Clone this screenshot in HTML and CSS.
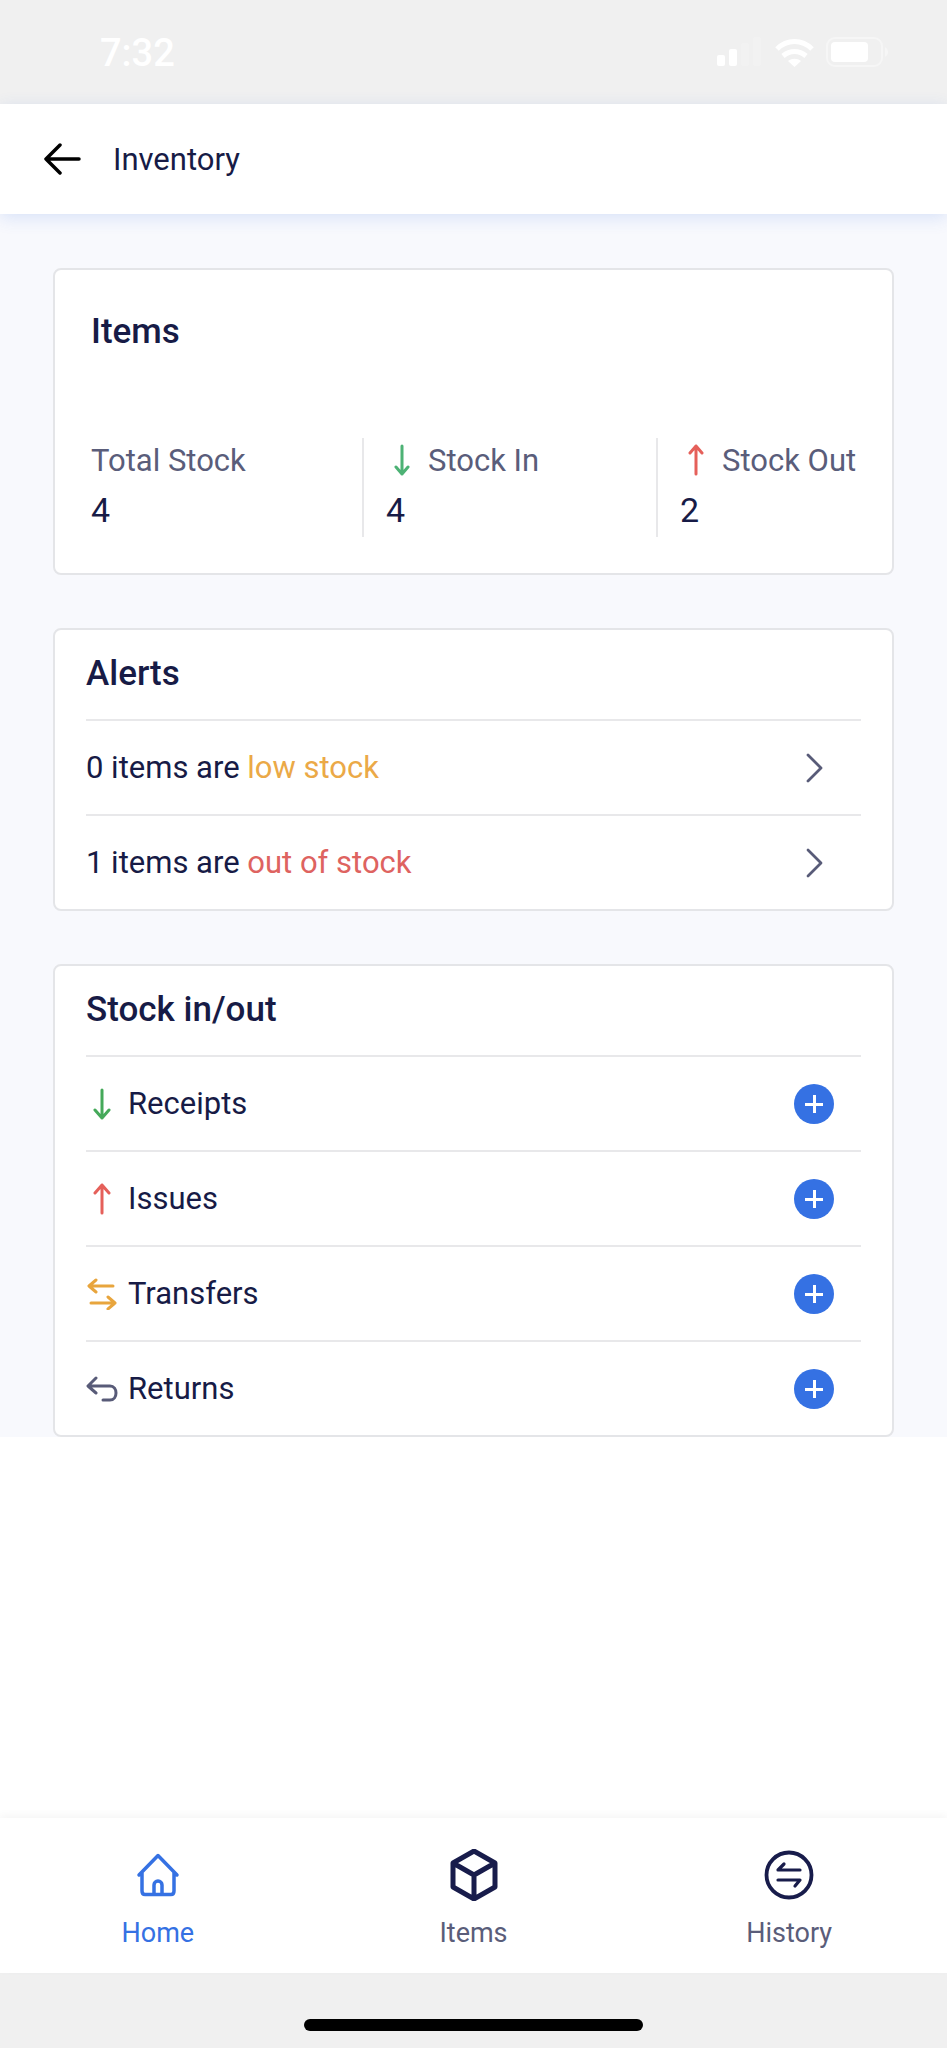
FILE: index.html
```html
<!DOCTYPE html>
<html>
<head>
  <title>Inventory</title>
  <link rel="stylesheet" href="styles.css">
</head>
<body>
  <div class="app">
    <div class="status-bar">
      <span class="time">7:32</span>
      <svg class="status-icons" width="173" height="34" viewBox="0 0 173 34">
        <rect x="0" y="20" width="8" height="11" rx="2" fill="#fff"/>
        <rect x="12" y="14" width="8" height="17" rx="2" fill="#fff"/>
        <rect x="24" y="8" width="8" height="23" rx="2" fill="#fff" opacity=".15"/>
        <rect x="36" y="2" width="8" height="29" rx="2" fill="#fff" opacity=".15"/>
        <path d="M60 14c10-10 25-10 35 0" fill="none" stroke="#fff" stroke-width="5"/>
        <path d="M66 21c7-6 16-6 23 0" fill="none" stroke="#fff" stroke-width="5"/>
        <path d="M71 26c4-3 9-3 13 0l-6.500 6z" fill="#fff"/>
        <rect x="110" y="3" width="55" height="28" rx="8" fill="none" stroke="#fff" stroke-width="2" opacity=".4"/>
        <rect x="114" y="7" width="37" height="20" rx="4" fill="#fff"/>
        <path d="M168 12c2 1 3 3 3 5s-1 4-3 5z" fill="#fff" opacity=".4"/>
      </svg>
    </div>

    <header class="topbar">
      <svg class="back" width="38" height="32" viewBox="0 0 38 32">
        <path d="M3 16H36M17 2 3 16l14 14" fill="none" stroke="#000" stroke-width="3.500" stroke-linecap="round" stroke-linejoin="round"/>
      </svg>
      <span class="page-title">Inventory</span>
    </header>

    <main class="content">
      <section class="card items-card">
        <h2 class="items-title">Items</h2>
        <div class="stats">
          <div class="stat">
            <div class="stat-label">Total Stock</div>
            <div class="stat-value">4</div>
          </div>
          <div class="stat">
            <div class="stat-label">
              <svg class="stat-arrow" width="18" height="32" viewBox="0 0 18 32"><path d="M9 2V30M3 23l6 7 6-7" fill="none" stroke="#4db275" stroke-width="3" stroke-linecap="round" stroke-linejoin="round"/></svg>
              Stock In
            </div>
            <div class="stat-value">4</div>
          </div>
          <div class="stat">
            <div class="stat-label">
              <svg class="stat-arrow" width="18" height="32" viewBox="0 0 18 32"><path d="M9 30V2M3 9l6-7 6 7" fill="none" stroke="#e5605a" stroke-width="3" stroke-linecap="round" stroke-linejoin="round"/></svg>
              Stock Out
            </div>
            <div class="stat-value">2</div>
          </div>
        </div>
      </section>

      <section class="card">
        <h2 class="card-title">Alerts</h2>
        <div class="row">
          <span>0 items are <span class="low">low stock</span></span>
          <svg class="chevron" width="20" height="30" viewBox="0 0 20 30"><path d="M3 2 16 15 3 28" fill="none" stroke="#585b78" stroke-width="2.800" stroke-linecap="round" stroke-linejoin="round"/></svg>
        </div>
        <div class="row">
          <span>1 items are <span class="out">out of stock</span></span>
          <svg class="chevron" width="20" height="30" viewBox="0 0 20 30"><path d="M3 2 16 15 3 28" fill="none" stroke="#585b78" stroke-width="2.800" stroke-linecap="round" stroke-linejoin="round"/></svg>
        </div>
      </section>

      <section class="card">
        <h2 class="card-title">Stock in/out</h2>
        <div class="row">
          <span class="row-name">
            <svg class="row-icon" width="32" height="32" viewBox="0 0 32 32"><path d="M16 2V30M9 22l7 8 7-8" fill="none" stroke="#45a95a" stroke-width="3" stroke-linecap="round" stroke-linejoin="round"/></svg>
            Receipts
          </span>
          <span class="plus"></span>
        </div>
        <div class="row">
          <span class="row-name">
            <svg class="row-icon" width="32" height="32" viewBox="0 0 32 32"><path d="M16 30V2M9 10l7-8 7 8" fill="none" stroke="#e5605a" stroke-width="3" stroke-linecap="round" stroke-linejoin="round"/></svg>
            Issues
          </span>
          <span class="plus"></span>
        </div>
        <div class="row">
          <span class="row-name">
            <svg class="row-icon" width="32" height="32" viewBox="0 0 32 32"><path d="M4 8H27M10 2 3 8l7 6M5 25H29M22 19l7 6-7 6" fill="none" stroke="#e8a53d" stroke-width="3" stroke-linecap="round" stroke-linejoin="round"/></svg>
            Transfers
          </span>
          <span class="plus"></span>
        </div>
        <div class="row">
          <span class="row-name">
            <svg class="row-icon" width="32" height="32" viewBox="0 0 32 32"><path d="M3 13H24c8 0 8 14 0 14H17M10 5 2 13l8 7" fill="none" stroke="#585b78" stroke-width="3" stroke-linecap="round" stroke-linejoin="round"/></svg>
            Returns
          </span>
          <span class="plus"></span>
        </div>
      </section>
    </main>

    <div class="spacer"></div>

    <nav class="tabbar">
      <div class="tab active">
        <svg width="52" height="52" viewBox="0 0 52 52"><path d="M7 26 26 6.500 45 26M10 23V42c0 2 1 3.500 3 3.500H39c2 0 3-1.500 3-3.500V23M22 45V36a4 4 0 0 1 8 0v9" fill="none" stroke="#3571e3" stroke-width="3.500" stroke-linecap="round" stroke-linejoin="round"/></svg>
        <span>Home</span>
      </div>
      <div class="tab">
        <svg width="52" height="52" viewBox="0 0 52 52"><path d="M26 2 47 14V38L26 50 5 38V14ZM5 14 26 26 47 14M26 26V50" fill="none" stroke="#181c4b" stroke-width="5" stroke-linejoin="round"/></svg>
        <span>Items</span>
      </div>
      <div class="tab">
        <svg width="52" height="52" viewBox="0 0 52 52"><circle cx="26" cy="26" r="22.500" fill="none" stroke="#181c4b" stroke-width="3.800"/><path d="M37 21H15l6-6M15 31H37l-5 6" fill="none" stroke="#181c4b" stroke-width="3.200" stroke-linecap="round" stroke-linejoin="round"/></svg>
        <span>History</span>
      </div>
    </nav>

    <div class="home-bar">
      <div class="home-indicator"></div>
    </div>
  </div>
</body>
</html>
```

FILE: styles.css
```css
* {
  box-sizing: border-box;
}

body {
  margin: 0;
  font-family: Roboto, "Liberation Sans", sans-serif;
  color: #171b46;
  background-color: #ffffff;
}

.app {
  display: flex;
  flex-direction: column;
  height: 2048px;
}

.status-bar {
  display: flex;
  justify-content: space-between;
  align-items: center;
  height: 104px;
  padding: 0 57px 0 100px;
  background-color: #f0f0f0;
}

.time {
  padding-top: 2px;
  color: #ffffff;
  font-size: 38px;
  font-weight: 500;
}

.topbar {
  position: relative;
  display: flex;
  align-items: center;
  gap: 32px;
  height: 110px;
  padding-left: 43px;
  background-color: #ffffff;
  box-shadow: 0 4px 16px rgba(53, 113, 227, 0.16);
}

.page-title {
  font-size: 31px;
}

.content {
  display: flex;
  flex-direction: column;
  gap: 53px;
  padding: 54px 53px 0 53px;
  background-color: #f8f9fd;
}

.card {
  background-color: #ffffff;
  border: 2px solid #e4e5e8;
  border-radius: 8px;
  padding: 0 31px;
}

.items-card {
  height: 307px;
  padding: 0 0 0 36px;
}

.items-title {
  margin: 0;
  padding-top: 41px;
  font-size: 35px;
  font-weight: 500;
}

.stats {
  display: flex;
  margin-top: 86px;
  height: 99px;
}

.stat {
  flex: 0 0 294px;
  padding: 4px 0 0 22px;
  border-left: 2px solid #e8e8ea;
}

.stat:first-child {
  flex: 0 0 271px;
  padding-left: 0;
  border-left: none;
}

.stat-label {
  display: flex;
  align-items: center;
  gap: 17px;
  height: 36px;
  color: #5a5d7a;
  font-size: 31px;
}

.stat-arrow {
  margin-left: 7px;
}

.stat-value {
  margin-top: 12px;
  font-size: 34px;
}

.card-title {
  margin: 0;
  height: 89px;
  line-height: 88px;
  font-size: 35px;
  font-weight: 500;
}

.row {
  display: flex;
  justify-content: space-between;
  align-items: center;
  height: 95px;
  padding-right: 36px;
  border-top: 2px solid #e8e8ea;
  font-size: 31px;
}

.row:has(.plus) {
  padding-right: 27px;
}

.row-name {
  display: flex;
  align-items: center;
  gap: 10px;
}

.low {
  color: #eba947;
}

.out {
  color: #de6360;
}

.plus {
  position: relative;
  width: 40px;
  height: 40px;
  border-radius: 50%;
  background-color: #3571e3;
}

.plus::before,
.plus::after {
  content: "";
  position: absolute;
  background-color: #ffffff;
}

.plus::before {
  left: 11px;
  top: 19px;
  width: 18px;
  height: 3px;
}

.plus::after {
  left: 19px;
  top: 11px;
  width: 3px;
  height: 18px;
}

.spacer {
  flex: 1;
}

.tabbar {
  position: relative;
  display: flex;
  height: 155px;
  background-color: #ffffff;
  box-shadow: 0 -3px 8px rgba(0, 0, 0, 0.04);
}

.tab {
  flex: 1;
  display: flex;
  flex-direction: column;
  align-items: center;
  padding-top: 31px;
  gap: 16px;
  color: #5a5d7a;
  font-size: 27px;
}

.tab.active {
  color: #3571e3;
}

.home-bar {
  display: flex;
  justify-content: center;
  height: 75px;
  padding-top: 46px;
  background-color: #f0f0f0;
}

.home-indicator {
  width: 339px;
  height: 12px;
  border-radius: 6px;
  background-color: #000000;
}
```
